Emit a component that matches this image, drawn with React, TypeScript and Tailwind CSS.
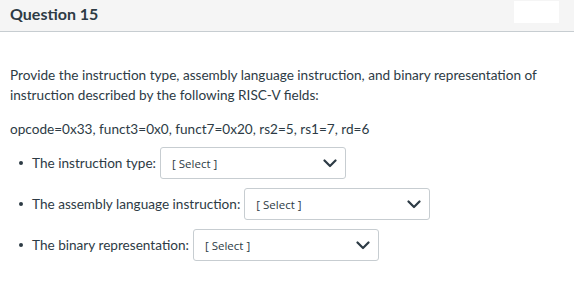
import React from "react";

function Chevron() {
  return (
    <svg width="14" height="9" viewBox="0 0 14 9" className="absolute right-[8px] top-[11px]">
      <path d="M1.5 1.5 L7 7 L12.5 1.5" fill="none" stroke="#2d3b45" strokeWidth="2.2" strokeLinecap="round" strokeLinejoin="round" />
    </svg>
  );
}

function Select() {
  return (
    <div className="relative ml-[4px] h-[32px] w-[186px] shrink-0 rounded-[3px] border border-[#c7cdd1] bg-white">
      <span className="absolute left-[11px] top-[6px] text-[11.5px] text-[#2d3b45]" style={{ fontFamily: '"Open Sans", sans-serif' }}>
        [ Select ]
      </span>
      <Chevron />
    </div>
  );
}

export default function App() {
  const items = [
    "The instruction type:",
    "The assembly language instruction:",
    "The binary representation:",
  ];
  return (
    <div className="w-[574px] h-[281px] bg-white text-[#2d3b45] overflow-hidden" style={{ fontFamily: "Lato, sans-serif" }}>
      <div className="flex h-[32px] items-start justify-between border-b border-[#c7cdd1] bg-[#f5f5f5] pl-[10px] pr-[15px]">
        <div className="pt-[4px] text-[16px] font-bold leading-[20px]">Question 15</div>
        <div className="mt-[1px] h-[22px] w-[45px] bg-white" />
      </div>
      <div className="px-[10px] pt-[33px] text-[13.6px] leading-[20px]">
        <p>
          Provide the instruction type, assembly language instruction, and binary representation of instruction described by the following RISC-V fields:
        </p>
        <p className="mt-[14px]">opcode=0x33, funct3=0x0, funct7=0x20, rs2=5, rs1=7, rd=6</p>
        <ul className="mt-[8px] flex flex-col gap-[9px] pl-[22px]">
          {items.map((t) => (
            <li key={t} className="flex items-center">
              <span className="relative">
                <span className="absolute left-[-13px] top-[8px] h-[4px] w-[4px] rounded-full bg-[#2d3b45]" />
                {t}
              </span>
              <Select />
            </li>
          ))}
        </ul>
      </div>
    </div>
  );
}
